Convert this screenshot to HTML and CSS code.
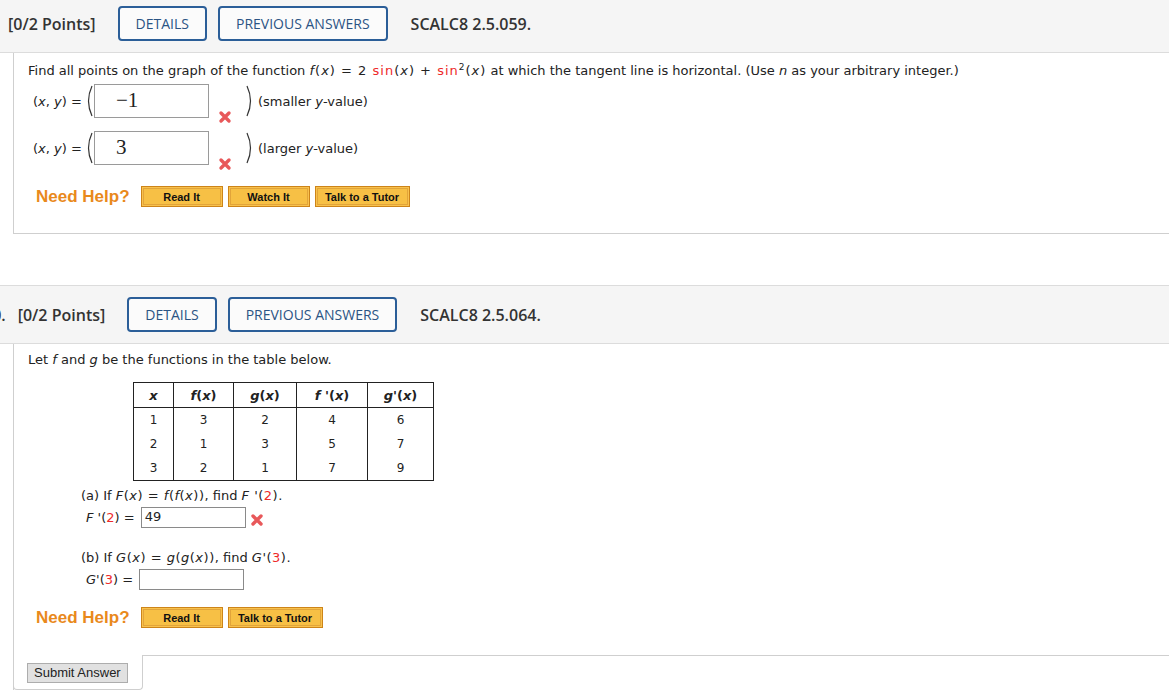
FILE: index.html
```html
<!DOCTYPE html>
<html>
<head>
<meta charset="utf-8">
<link rel="stylesheet" href="styles.css">
</head>
<body>
<div class="qhead first">
  <span class="pts">[0/2 Points]</span>
  <span class="hbtn">DETAILS</span>
  <span class="hbtn">PREVIOUS ANSWERS</span>
  <span class="code">SCALC8 2.5.059.</span>
</div>
<div class="panel p1">
  <div class="q">Find all points on the graph of the function <span class="m"><i>f</i>(<i>x</i>) = 2 <span class="r">sin</span>(<i>x</i>) + <span class="r">sin</span><sup>2</sup>(<i>x</i>)</span> at which the tangent line is horizontal. (Use <i>n</i> as your arbitrary integer.)</div>
  <div class="pt">
    <span class="lbl">(<i>x</i>, <i>y</i>) =</span>
    <svg class="par" width="10" height="32" viewBox="0 0 10 32"><path d="M8 1 Q1 16 8 31" fill="none" stroke="#333" stroke-width="1.2"/></svg>
    <span class="big">−1</span>
    <svg class="xm" width="14" height="14" viewBox="0 0 14 14"><path d="M3 3 L11 11 M11 3 L3 11" stroke="#e8585a" stroke-width="3.4" stroke-linecap="round"/></svg>
    <svg class="par rp" width="10" height="32" viewBox="0 0 10 32"><path d="M2 1 Q9 16 2 31" fill="none" stroke="#333" stroke-width="1.2"/></svg>
    <span class="desc">(smaller <i>y</i>-value)</span>
  </div>
  <div class="pt">
    <span class="lbl">(<i>x</i>, <i>y</i>) =</span>
    <svg class="par" width="10" height="32" viewBox="0 0 10 32"><path d="M8 1 Q1 16 8 31" fill="none" stroke="#333" stroke-width="1.2"/></svg>
    <span class="big">3</span>
    <svg class="xm" width="14" height="14" viewBox="0 0 14 14"><path d="M3 3 L11 11 M11 3 L3 11" stroke="#e8585a" stroke-width="3.4" stroke-linecap="round"/></svg>
    <svg class="par rp" width="10" height="32" viewBox="0 0 10 32"><path d="M2 1 Q9 16 2 31" fill="none" stroke="#333" stroke-width="1.2"/></svg>
    <span class="desc">(larger <i>y</i>-value)</span>
  </div>
  <div class="help">
    <span class="nh">Need Help?</span>
    <span class="ob w82"><span>Read It</span></span>
    <span class="ob w82"><span>Watch It</span></span>
    <span class="ob w95"><span>Talk to a Tutor</span></span>
  </div>
</div>

<div class="qhead second">
  <span class="num">10.</span>
  <span class="pts">[0/2 Points]</span>
  <span class="hbtn">DETAILS</span>
  <span class="hbtn">PREVIOUS ANSWERS</span>
  <span class="code">SCALC8 2.5.064.</span>
</div>
<div class="panel p2">
  <div class="q">Let <i>f</i> and <i>g</i> be the functions in the table below.</div>
  <table class="tbl">
    <tr><th><i>x</i></th><th><i>f</i>(<i>x</i>)</th><th><i>g</i>(<i>x</i>)</th><th><i>f</i> '(<i>x</i>)</th><th><i>g</i>'(<i>x</i>)</th></tr>
    <tr><td>1</td><td>3</td><td>2</td><td>4</td><td>6</td></tr>
    <tr><td>2</td><td>1</td><td>3</td><td>5</td><td>7</td></tr>
    <tr><td>3</td><td>2</td><td>1</td><td>7</td><td>9</td></tr>
  </table>
  <div class="part">
    <div class="pq">(a) If <span class="m"><i>F</i>(<i>x</i>) = <i>f</i>(<i>f</i>(<i>x</i>))</span>, find <span class="m"><i>F</i> '(<span class="r">2</span>)</span>.</div>
    <div class="pa">
      <span class="al"><i>F</i> '(<span class="r">2</span>) =</span>
      <span class="sm">49</span>
      <svg class="xs" width="14" height="14" viewBox="0 0 14 14"><path d="M3 3 L11 11 M11 3 L3 11" stroke="#e8585a" stroke-width="3.4" stroke-linecap="round"/></svg>
    </div>
  </div>
  <div class="part pb">
    <div class="pq">(b) If <span class="m"><i>G</i>(<i>x</i>) = <i>g</i>(<i>g</i>(<i>x</i>))</span>, find <span class="m"><i>G</i>'(<span class="r">3</span>)</span>.</div>
    <div class="pa">
      <span class="al"><i>G</i>'(<span class="r">3</span>) =</span>
      <span class="sm"></span>
    </div>
  </div>
  <div class="help h2">
    <span class="nh">Need Help?</span>
    <span class="ob w82"><span>Read It</span></span>
    <span class="ob w95"><span>Talk to a Tutor</span></span>
  </div>
  <div class="foot">
    <div class="tab"><span class="submit">Submit Answer</span></div>
    <div class="fill"></div>
  </div>
</div>
</body>
</html>
```
FILE: styles.css
```css
html, body { margin: 0; padding: 0; background: #fff; }
body { font-family: "DejaVu Sans", Verdana, sans-serif; font-size: 13px; color: #222; width: 1169px; overflow: hidden; }

.qhead {
  display: flex; align-items: center;
  background: #f5f5f5;
  border-bottom: 1px solid #dcdcdc;
  font-family: "Open Sans", sans-serif;
  height: 35px;
  padding: 6px 0 11px 8px;
}
.qhead.second { border-top: 1px solid #dcdcdc; padding: 11px 0 11px 0; margin-top: 51px; }
.num { font-weight: 600; font-size: 16px; color: #333; margin-left: -17px; margin-right: 12px; }
.second .pts { margin-right: 22px; }
.pts { font-weight: 600; font-size: 16px; color: #333; margin-right: 22px; }
.hbtn {
  box-sizing: border-box; height: 35px; display: inline-flex; align-items: center;
  border: 2px solid #2b5e98; border-radius: 4px; padding: 0 16px;
  font-size: 14px; color: #2b5484; background: #fbfbfb; margin-right: 11px;
}
.code { font-weight: 600; font-size: 16px; color: #333; margin-left: 12px; }

.panel { margin-left: 13px; border-left: 1px solid #cfcfcf; }
.p1 { border-bottom: 1px solid #cfcfcf; padding: 10px 0 25px 14px; height: 145px; }
.q { line-height: 16px; white-space: nowrap; }
.m { letter-spacing: 1px; }
.pq .m { letter-spacing: 0.5px; }
.m i, .q i, .pq i, .al i, th i { font-style: italic; }
.r { color: #ee2a2a; }
sup { font-size: 9px; vertical-align: 5px; line-height: 0; }

.pt { display: flex; align-items: center; height: 34px; margin-top: 5px; position: relative; }
.pt + .pt { margin-top: 13px; }
.lbl { margin-left: 5px; width: 49px; white-space: nowrap; flex-shrink: 0; }
.par { margin-left: 2px; flex-shrink: 0; }
.big {
  box-sizing: border-box; width: 115px; height: 34px; border: 1px solid #9a9a9a; flex-shrink: 0;
  font-family: "Liberation Serif", serif; font-size: 21px; color: #222;
  padding: 3px 0 0 21px; margin-left: 0;
}
.xm { align-self: flex-end; margin: 0 0 -6px 9px; flex-shrink: 0; }
.rp { margin-left: 13px; }
.desc { margin-left: 3px; white-space: nowrap; }

.help { display: flex; align-items: center; margin-top: 21px; margin-left: 8px; }
.nh { font-family: "Liberation Sans", Arial, sans-serif; font-weight: bold; font-size: 17px; color: #e9891c; margin-right: 11px; }
.ob {
  box-sizing: border-box; height: 21px; border: 1px solid #cd8419; background: #f8c24d;
  padding: 1px; margin-right: 5px; display: inline-flex;
}
.w82 { width: 82px; }
.w95 { width: 95px; }
.ob span {
  flex: 1;
  display: flex; align-items: center; justify-content: center;
  border: 1px solid #e2a43a; background: #f7c045;
  font-family: "Liberation Sans", Arial, sans-serif; font-weight: bold; font-size: 11px; color: #111;
  height: 15px;
}

.p2 { padding: 8px 0 0 0; }
.p2 .q { padding-left: 14px; }
.tbl { border-collapse: collapse; margin: 14px 0 0 119px; border: 1px solid #222; }
.tbl th, .tbl td { border-left: 1px solid #222; text-align: center; font-size: 12px; padding: 0; }
.tbl th { height: 24px; font-weight: bold; font-size: 13px; border-bottom: 1px solid #222; }
.tbl td { height: 24px; }
.tbl tr th:nth-child(1) { width: 39px; }
.tbl tr th:nth-child(2) { width: 59px; }
.tbl tr th:nth-child(3) { width: 62px; }
.tbl tr th:nth-child(4) { width: 70px; }
.tbl tr th:nth-child(5) { width: 65px; }

.part { margin-left: 67px; margin-top: 7px; }
.part.pb { margin-top: 22px; }
.pq { line-height: 16px; }
.pa { display: flex; align-items: center; margin-top: 3px; margin-left: 5px; }
.al { margin-right: 6px; white-space: nowrap; }
.sm { box-sizing: border-box; width: 105px; height: 21px; border: 1px solid #8a8a8a; padding: 1px 3px; font-size: 13px; }
.xs { margin-left: 4px; margin-top: 4px; }

.h2 { margin-top: 17px; margin-left: 22px; }
.foot { display: flex; margin-top: 27px; }
.tab {
  width: 130px; height: 35px; border-right: 1px solid #cfcfcf; border-bottom: 1px solid #cfcfcf;
  border-bottom-right-radius: 4px; margin-left: -1px; border-left: 1px solid #cfcfcf; border-bottom-left-radius: 4px;
  padding: 8px 0 0 13px; box-sizing: border-box;
}
.fill { flex: 1; border-top: 1px solid #cfcfcf; }
.submit {
  display: inline-block; font-family: "Liberation Sans", Arial, sans-serif; font-size: 13px; color: #222;
  background: #e1e1e1; border: 1px solid #adadad; padding: 1px 6px; line-height: 16px;
}
```
